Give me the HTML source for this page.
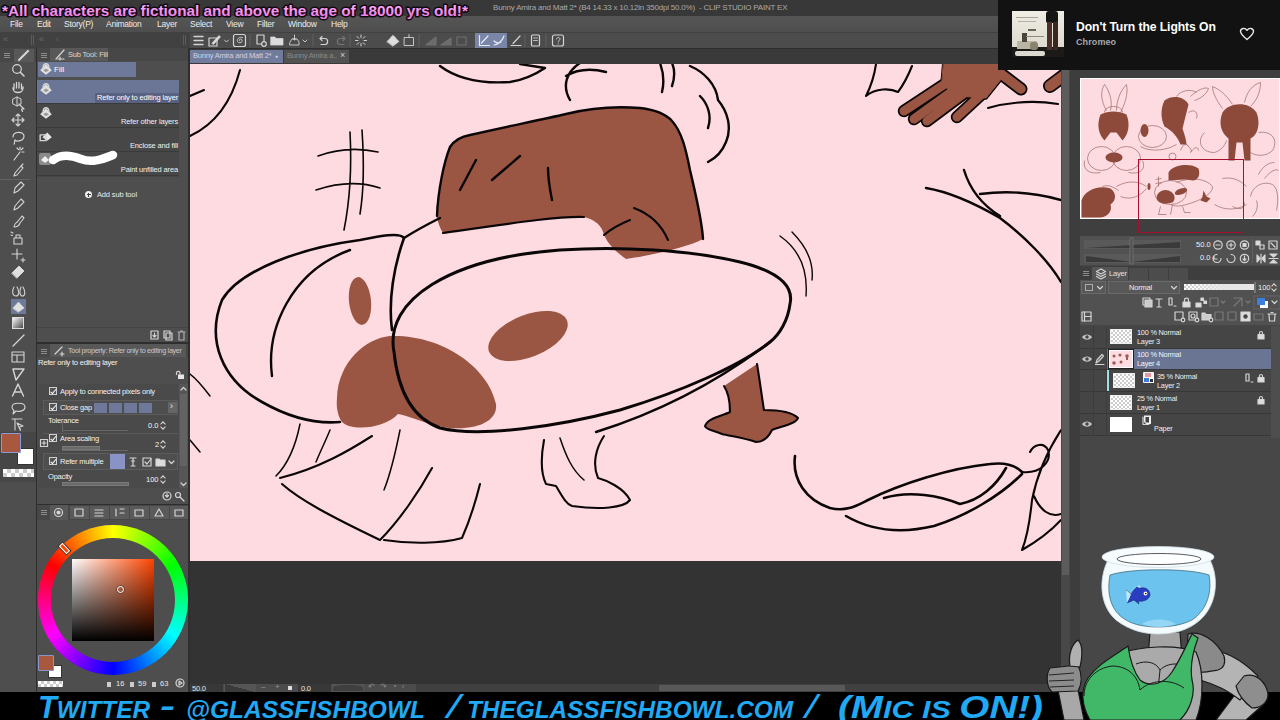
<!DOCTYPE html>
<html><head><meta charset="utf-8"><title>CLIP STUDIO PAINT EX</title>
<style>
html,body{margin:0;padding:0;}
body{width:1280px;height:720px;overflow:hidden;background:#2e2e2e;position:relative;font-family:"Liberation Sans",sans-serif;color:#e4e4e4;font-size:8px;}
.a{position:absolute;}
.t{position:absolute;white-space:nowrap;line-height:1;}
svg{position:absolute;overflow:visible;}
#titlebar{left:0;top:0;width:1280px;height:16px;background:#383838;}
#menubar{left:0;top:16px;width:1280px;height:16px;background:linear-gradient(#555,#4e4e4e);}
#menubar span{position:absolute;top:4px;font-size:8.5px;color:#ececec;letter-spacing:-0.25px;line-height:1;}
#row3{left:0;top:32px;width:1280px;height:16px;background:#414141;}
#cmdbar{left:190px;top:33px;width:880px;height:15px;background:#4c4c4c;}
#tabrow{left:190px;top:49px;width:880px;height:15px;background:#3a3a3a;}
#canvas{left:190px;top:64px;width:871px;height:497px;background:#fedbe1;overflow:hidden;}
#below{left:190px;top:561px;width:871px;height:123px;background:#333;}
#vscroll{left:1061px;top:63px;width:9px;height:629px;background:#484848;}
#hbar{left:190px;top:684px;width:880px;height:8px;background:#4b4b4b;}
#banner{left:0;top:692px;width:1280px;height:28px;background:#000;}
#toolcol{left:0;top:48px;width:36px;height:644px;background:#4e4e4e;}
#subtool{left:37px;top:48px;width:151px;height:294px;background:#4e4e4e;}
#toolprop{left:37px;top:344px;width:151px;height:160px;background:#4e4e4e;}
#colorp{left:37px;top:505px;width:151px;height:187px;background:#4e4e4e;}
#right{left:1070px;top:70px;width:210px;height:622px;background:#474747;}
#music{left:998px;top:0;width:282px;height:70px;background:#121212;z-index:40;}
.ck{position:absolute;background-color:#fff;background-image:linear-gradient(45deg,#ccc 25%,transparent 25%,transparent 75%,#ccc 75%),linear-gradient(45deg,#ccc 25%,transparent 25%,transparent 75%,#ccc 75%);background-size:6px 6px;background-position:0 0,3px 3px;}
.cb{position:absolute;width:8px;height:8px;border:1px solid #d0d0d0;background:#555;box-sizing:border-box;margin-top:-1px;}
.cb:after{content:"";position:absolute;left:2px;top:-0.5px;width:2px;height:4.5px;border:solid #fff;border-width:0 1.4px 1.4px 0;transform:rotate(40deg);}
.sp{position:absolute;width:5px;height:9px;}
.sp:before,.sp:after{content:"";position:absolute;left:0.5px;width:3px;height:3px;border:solid #ddd;border-width:1px 0 0 1px;}
.sp:before{top:1px;transform:rotate(45deg);}
.sp:after{top:4px;transform:rotate(225deg);}
.ic{stroke:#d4d4d4;fill:none;stroke-width:1.2;stroke-linecap:round;stroke-linejoin:round;}
.dim{opacity:.35;}
</style></head><body>
<div id="titlebar" class="a">
 <span class="t" style="left:493px;top:4px;font-size:8px;color:#a9a9a9;letter-spacing:-0.21px">Bunny Amira and Matt 2* (B4 14.33 x 10.12in 350dpi 50.0%)&nbsp; - CLIP STUDIO PAINT EX</span>
</div>
<div id="menubar" class="a">
 <span style="left:10px">File</span><span style="left:37px">Edit</span><span style="left:64px">Story(P)</span><span style="left:106px">Animation</span><span style="left:157px">Layer</span><span style="left:190px">Select</span><span style="left:226px">View</span><span style="left:257px">Filter</span><span style="left:288px">Window</span><span style="left:331px">Help</span>
</div>
<svg id="disclaimer" width="480" height="20" viewBox="0 0 480 20" style="left:0;top:0;z-index:50"><defs><linearGradient id="pk" x1="0" y1="0" x2="0" y2="1"><stop offset="0.150" stop-color="#ffb4fb"/><stop offset="0.800" stop-color="#ee84e6"/></linearGradient></defs><text x="2" y="15.600" font-family="'Liberation Sans',sans-serif" font-weight="bold" font-size="15.300" fill="url(#pk)" stroke="#120812" stroke-width="3" stroke-linejoin="round" paint-order="stroke">*All characters are fictional and above the age of 18000 yrs old!*</text></svg>
<div id="row3" class="a">
 <span class="t" style="left:3px;top:3px;font-size:9px;color:#6a6a6a;letter-spacing:-1px">«</span>
 <span class="t" style="left:39px;top:3px;font-size:9px;color:#6a6a6a;letter-spacing:-1px">«</span>
 <span class="t" style="left:56px;top:3px;font-size:9px;color:#6a6a6a;">‹</span>
 <div class="a" style="left:31px;top:3px;width:3px;height:10px;border-left:1px solid #5c5c5c;border-right:1px solid #5c5c5c;box-sizing:border-box"></div>
 <div class="a" style="left:183px;top:3px;width:3px;height:10px;border-left:1px solid #5c5c5c;border-right:1px solid #5c5c5c;box-sizing:border-box"></div>
</div>
<div id="cmdbar" class="a">
 <svg width="880" height="15" viewBox="190 33 880 15" style="left:0;top:0">
  <rect x="475" y="33" width="32" height="15" fill="#7a86a8"/>
  <g stroke="#666" stroke-width="0.800"><path d="M250,34 L250,47 M313,34 L313,47 M350,34 L350,47 M419,34 L419,47 M525,34 L525,47 M546,34 L546,47"/></g>
  <g class="ic" stroke-width="1.100">
   <path d="M194,36.500 L203,36.500 M194,40.500 L203,40.500 M194,44.500 L203,44.500" stroke-width="1.400"/>
   <rect x="209" y="38" width="8" height="8"/><path d="M212,43 L219,35.500 L220.500,37 L213.500,44.500 Z" fill="#ddd" stroke-width="0.700"/><path d="M224.500,40 L226.500,42 L228.500,40" stroke-width="0.900"/>
   <rect x="233.500" y="34.500" width="12" height="12" rx="2"/><path d="M239.500,41 C238,39.500 241,38 242,40 C243,42.500 239,44 237.500,41.500 C236.500,38.500 240,36.500 242.500,37.500" stroke-width="0.900"/>
   <path d="M257,35 L264,35 L264,44 L257,44 Z"/><circle cx="264" cy="44" r="2.300" fill="#4c4c4c"/>
   <path d="M271,37 L275,37 L276,38.500 L283,38.500 L283,45 L271,45 Z" fill="#ddd" stroke-width="0.800"/>
   <path d="M290,45 L299,45 L299,42 L297,39 L292,39 L290,42 Z M294.500,35 L294.500,40 M293,38.500 L294.500,40 L296,38.500" stroke-width="0.900"/><path d="M303,40 L305,42 L307,40" stroke-width="0.900"/>
   <path d="M320,38.500 L325,38.500 C328.500,38.500 328.500,44.500 325,44.500 L321,44.500 M322,36.500 L320,38.500 L322,40.500"/>
   <g opacity="0.300"><path d="M345,38.500 L340,38.500 C336.500,38.500 336.500,44.500 340,44.500 L344,44.500 M343,36.500 L345,38.500 L343,40.500"/></g>
   <g stroke-width="1"><path d="M361,35 L361,37.500 M361,43.500 L361,46 M355.500,40.500 L358,40.500 M364,40.500 L366.500,40.500 M357,36.500 L358.800,38.300 M363.200,42.700 L365,44.500 M365,36.500 L363.200,38.300 M358.800,42.700 L357,44.500"/></g>
   <path d="M387,41.500 L393,35.500 L399,41.500 L393,46 Z" fill="#ddd" stroke-width="0.700"/><path d="M390.500,38.500 C391,35 395,35 395.500,38.500" stroke-width="0.800"/>
   <rect x="404.500" y="37.500" width="9" height="8" stroke-width="0.900"/><path d="M409,34.500 L409,37.500" stroke-width="0.900"/>
   <g opacity="0.250"><path d="M426,45 L436,45 L436,37 Z" fill="#ccc"/><path d="M441,45 L451,45 L451,38 Z" fill="#ccc"/><rect x="457" y="37" width="9" height="8"/></g>
   <path d="M479.500,35.500 L479.500,45.500 L489.500,45.500 M481.500,43 L488,36" stroke="#e8ecf8"/>
   <path d="M494,45 C497,45 502,42 504,36 M494,41 C496,43 499,43 501,42" stroke="#e8ecf8"/>
   <path d="M511,45.500 L521,45.500 M513,43.500 L520,36"/>
   <rect x="531.500" y="35" width="8" height="11" rx="1"/><path d="M533.500,38 L537.500,38 M533.500,40.500 L537.500,40.500" stroke-width="0.800"/>
   <rect x="552.500" y="35" width="11" height="11" rx="2"/><path d="M556.500,39 C556.500,37 560,37 560,39 C560,40.500 558.200,40.500 558.200,42 M558.200,43.800 L558.200,44" stroke-width="0.900"/>
  </g>
 </svg>
</div>
<div id="tabrow" class="a">
 <div class="a" style="left:0;top:1px;width:93px;height:13px;background:#717b9b"></div>
 <span class="t" style="left:3px;top:3px;font-size:7.5px;color:#cfd4e6;letter-spacing:-0.2px">Bunny Amira and Matt 2*</span>
 <span class="t" style="left:85px;top:3px;font-size:5px;color:#cfd4e6;margin-top:1.5px">●</span>
 <div class="a" style="left:94px;top:1px;width:65px;height:13px;background:#525252"></div>
 <span class="t" style="left:97px;top:3px;font-size:7.5px;color:#8a8a8a;letter-spacing:-0.2px">Bunny Amira a..</span>
 <span class="t" style="left:150px;top:2px;font-size:9px;color:#d0d0d0">×</span>
</div>
<div id="canvas" class="a">
<svg width="871" height="497" viewBox="190 64 871 497" style="left:0;top:0">
 <g fill="#9a5643" stroke="none">
  <path d="M443,233 C438,224 435,214 437,204 C440,184 444,162 450,147 C456,138 464,136 470,135 C500,128 540,120 566,114 C590,108 615,106 640,108 C656,110 666,114 672,121 C682,132 686,150 690,170 C696,196 702,220 703,239 C690,246 660,254 626,259 C616,252 608,244 604,235 C602,226 596,220 584,217 C560,216 520,222 443,233 Z"/>
  <path d="M337,398 C338,362 366,338 390,336 C440,334 488,366 496,404 C498,420 480,430 450,428 C430,426 410,416 398,414 C386,428 352,432 342,422 C338,416 336,408 337,398 Z"/>
  <ellipse cx="528" cy="336" rx="42" ry="21" transform="rotate(-22 528 336)"/>
  <ellipse cx="360" cy="301" rx="11" ry="24" transform="rotate(-6 360 301)"/>
  <path d="M757,364 C760,382 762,398 764,410 C778,410 792,412 798,418 C796,424 782,426 772,430 C768,438 762,442 756,442 C744,438 730,436 722,434 C714,430 706,430 705,426 C708,418 722,416 730,412 C730,402 728,392 724,386 Z"/>
 </g>

 <g fill="none" stroke-linecap="round" stroke-linejoin="round">
  <g stroke="#0b0708">
   <path d="M948,82 L904,111 M957,88 L914,119 M966,92 L927,121 M984,92 L957,117" stroke-width="12.500"/>
   <path d="M996,70 L1021,89" stroke-width="13"/>
   <path d="M1050,86 L1066,74" stroke-width="14"/>
   <path d="M944,60 L998,60 L1002,78 L986,98 L956,96 L942,84 Z" fill="#0b0708" stroke-width="3.500"/>
  </g>
  <g stroke="#9a5643">
   <path d="M944,58 L998,58 L1002,78 L986,98 L956,96 L942,84 Z" fill="#9a5643" stroke-width="1"/>
   <path d="M948,82 L904,111 M957,88 L914,119 M966,92 L927,121 M984,92 L957,117" stroke-width="9"/>
   <path d="M996,70 L1021,89" stroke-width="9.500"/>
   <path d="M1050,86 L1066,74" stroke-width="10.500"/>
  </g>
 </g>
 <g fill="none" stroke="#0b0708" stroke-width="2.400" stroke-linecap="round" stroke-linejoin="round">
  <path d="M437,216 C438,190 444,162 450,147 C456,138 464,136 470,135 C500,128 540,120 566,114 C590,108 615,106 640,108 C656,110 666,114 672,121 C682,132 686,150 690,170 C696,196 702,220 703,239" stroke-width="2.400"/>
  <path d="M443,233 C520,222 560,216 584,217" stroke-width="2.100"/>
  <path d="M492,180 L520,156 M548,168 C548,180 550,190 552,200 M460,190 L476,160" stroke-width="2.400"/>
  <path d="M634,208 C650,214 662,226 668,240 M604,235 C610,230 620,224 630,220" stroke-width="2.100"/>
  <path d="M394,352 C384,300 450,258 560,250 C620,246 690,250 740,262 C780,272 794,286 790,304 C788,320 780,334 770,342 C740,366 680,392 620,410 C560,426 480,438 440,428 C412,418 398,390 394,352 Z" stroke-width="3"/>
  <path d="M392,330 C388,300 394,266 404,238 C400,232 380,236 360,240 C300,248 240,270 222,300 C206,340 222,380 262,402 C290,418 316,424 340,422" stroke-width="2.600"/>
  <path d="M272,376 C266,330 290,272 350,250 M404,238 C420,228 432,222 440,218" stroke-width="2.400"/>
  <path d="M770,342 C720,380 660,412 596,432" stroke-width="2.400"/>
  <path d="M282,484 C300,500 330,516 380,540 M380,540 C400,520 420,490 432,468 M280,478 C320,468 350,450 372,436 M384,540 C410,544 440,544 462,538 C470,520 476,500 480,484" stroke-width="2.100"/>
  <path d="M544,440 C540,462 542,476 546,484 L556,486 C562,496 566,504 572,506 C600,510 624,508 630,500 C624,488 606,480 598,478 C592,464 596,448 604,436" stroke-width="2.100"/>
  <path d="M300,424 C296,444 290,462 276,476 M330,430 C326,440 320,452 316,462 M400,430 C396,450 392,470 384,490 M560,438 C566,456 572,470 584,480" stroke-width="1.500"/>
  <path d="M926,188 C950,192 976,204 1000,218 C1024,236 1048,260 1061,282 M964,170 C970,190 984,206 1000,216 M980,194 C1010,190 1040,194 1061,200" stroke-width="2.400"/>
  <path d="M795,456 C792,480 806,500 830,508 C846,512 856,506 868,500 C900,484 950,468 990,464 C1006,462 1016,466 1022,472 M846,516 C870,530 900,534 934,526 C966,516 1000,496 1022,474 M884,498 C910,490 940,496 960,504 C980,500 996,486 1006,468" stroke-width="2.600"/>
  <path d="M1022,472 C1040,474 1052,462 1048,450 C1044,442 1034,444 1030,452 M1061,430 C1044,456 1036,480 1032,500 C1030,520 1026,540 1022,550 C1036,542 1050,532 1061,520 M1034,496 C1040,510 1050,518 1061,514" stroke-width="2.100"/>
  <path d="M350,132 C352,170 350,200 344,230 M362,130 C364,160 364,190 360,214 M318,156 C340,148 360,148 378,152 M316,190 C340,182 362,182 380,188" stroke-width="1.600"/>
  <path d="M440,66 C456,78 480,84 510,82 C524,80 536,74 545,68 L520,64 M570,100 C562,86 566,72 580,63 M566,76 C576,70 590,68 606,72 M660,63 C664,74 664,84 662,92 M672,63 C676,72 674,80 672,86 M690,66 C704,72 716,84 718,100 C728,112 732,128 726,142 C722,152 716,158 708,162 M700,96 C708,104 712,116 708,128" stroke-width="2.400"/>
  <path d="M190,136 C216,124 232,100 240,70 M190,96 L204,90 M876,64 C874,78 870,88 866,96 C876,88 890,88 898,92 M912,66 C908,76 904,84 898,92 M988,108 C1010,102 1034,100 1058,104" stroke-width="2.100"/>
  <path d="M780,236 C800,250 808,270 806,296 M792,232 C806,246 814,262 812,280" stroke-width="1.400"/>
  <path d="M757,364 C760,382 762,398 764,410 C778,410 792,412 798,418 C796,424 782,426 772,430 C768,438 762,442 756,442 C744,438 730,436 722,434 C714,430 706,430 705,426 C708,418 722,416 730,412 C730,402 728,392 724,386" stroke-width="2.100"/>
  <path d="M190,374 C198,380 204,388 210,396 M190,440 L200,452" stroke-width="1.500"/>
 </g>
</svg>
</div>
<div id="below" class="a"></div>
<div id="vscroll" class="a"><div class="a" style="left:1px;top:0;width:7px;height:512px;background:#5c5c5c"></div></div>
<div id="hbar" class="a">
 <div class="a" style="left:0;top:0;width:33px;height:8px;background:#383838"></div>
 <span class="t" style="left:2px;top:0.500px;font-size:7.500px;color:#e6e6e6;letter-spacing:-0.2px">50.0</span>
 <div class="a" style="left:34px;top:0;width:32px;height:8px;background:#555"></div>
 <div class="a" style="left:35px;top:0;width:30px;height:8px;background:linear-gradient(to right top,#3a3a3a 50%,#555 50%)"></div>
 <span class="t" style="left:71px;top:-1px;font-size:8px;color:#999">–</span><span class="t" style="left:85px;top:-1px;font-size:8px;color:#999">+</span>
 <div class="a" style="left:98px;top:2px;width:4px;height:4px;background:#ddd"></div>
 <div class="a" style="left:108px;top:0;width:33px;height:8px;background:#383838"></div>
 <span class="t" style="left:111px;top:0.500px;font-size:7.500px;color:#e6e6e6;letter-spacing:-0.2px">0.0</span>
 <div class="a" style="left:142px;top:0;width:32px;height:8px;background:#555"></div>
 <div class="a" style="left:143px;top:1px;width:30px;height:6px;background:#3f3f3f;border-radius:40% 40% 0 0"></div>
 <span class="t" style="left:178px;top:-1px;font-size:8px;color:#888;letter-spacing:5px">↶↷◔‹</span>
 <div class="a" style="left:226px;top:0;width:645px;height:8px;background:#404040"></div>
 <div class="a" style="left:469px;top:1px;width:186px;height:6px;background:#585858"></div>
</div>
<div id="toolcol" class="a">
 <div class="a" style="left:0;top:0;width:36px;height:14px;background:#474747"></div>
 <div class="a" style="left:14px;top:1px;width:20px;height:13px;background:#585858"></div>
 <div class="a" style="left:4px;top:5px;width:6px;height:5px;border-top:1px solid #8c8c8c;border-bottom:1px solid #8c8c8c;box-sizing:border-box"></div>
 <div class="a" style="left:4px;top:7px;width:6px;height:1px;background:#8c8c8c"></div>
 <svg width="36" height="644" viewBox="0 48 36 644" style="left:0;top:0">
  <g class="ic">
   <path d="M19,60 L28,51" stroke-width="2.2"/>
   <circle cx="17" cy="69" r="4.3"/><path d="M20.5,72.5 L24,76" stroke-width="1.6"/>
   <path d="M14,89 L14,84 M16.5,88 L16.5,82.5 M19,88 L19,82.5 M21.5,89 L21.5,84 M13,88 C13,94 23,94 23,88 L23,87" stroke-width="1.3"/>
   <path d="M13,99 L17,97 L21,99 L21,104 L17,106 L13,104 Z M17,97 L17,106" stroke-width="1"/><path d="M19,104 L24,109 L21.5,109 L22.5,111.5" stroke-width="1.2"/>
   <path d="M18,114 L18,126 M12,120 L24,120 M16,116 L18,114 L20,116 M16,124 L18,126 L20,124 M14,118 L12,120 L14,122 M22,118 L24,120 L22,122" stroke-width="1.1"/>
   <path d="M13,137 C13,131 24,131 24,136 C24,141 17,142 15,140 C14,142 15,143 14,144" stroke-width="1.2"/>
   <path d="M14,160 L20,152 M20,147 L20,150 M24,152 L22,152 M23,148 L21.5,149.5 M17,148 L18.5,149.5" stroke-width="1.2"/>
   <path d="M14,176 L15,173 L21,166 L23,168 L17,175 Z M21,166 L23,164" stroke-width="1.1"/>
   <path d="M14,193 L15,188 L21,182 L24,185 L18,191 Z" stroke-width="1.1"/>
   <path d="M14,210 L15,206 L21,199 L24,202 L18,208 Z" stroke-width="1.1"/>
   <path d="M14,227 C14,223 17,223 18,221 L22,216 L24,218 L20,223 C19,226 17,227 14,227 Z" stroke-width="1.1"/>
   <path d="M14,238 L22,238 L22,244 L14,244 Z M16,238 L16,235 L20,235 L20,238 M11,232 L13,233 M11,235 L12.5,235.5" stroke-width="1.1"/>
   <path d="M17,249 L17,259 M12,254 L22,254 M23,258 L23,262 M21,260 L25,260" stroke-width="1.1"/>
   <path d="M12,273 L19,266 L24,271 L17,278 Z" fill="#e0e0e0" stroke-width="1"/>
   <path d="M14,287 C11,292 13,296 16,296 C19,296 20,292 17,287 M21,287 C19,292 20,296 22.5,296 C25,296 26,292 23,287" stroke-width="1.1"/>
  </g>
  <rect x="11" y="299" width="15" height="15" fill="#6e7898"/>
  <g class="ic">
   <path d="M13,308 L18.5,302 L24,308 L18.5,312 Z" fill="#e0e0e0" stroke-width="0.8"/>
  </g>
  <defs><linearGradient id="gr1" x1="0" y1="0" x2="1" y2="1"><stop offset="0" stop-color="#fff"/><stop offset="1" stop-color="#444"/></linearGradient></defs>
  <rect x="12.5" y="317.500" width="11" height="11" fill="url(#gr1)" stroke="#ddd" stroke-width="1"/>
  <g class="ic">
   <path d="M13,346 L24,335" stroke-width="1.3"/>
   <path d="M12,352 L24,352 L24,362 L12,362 Z M12,355 L24,355 M17,355 L17,362" stroke-width="1.1"/>
   <path d="M13,369 L24,369 L16,380 Z" stroke-width="1.4"/>
   <path d="M12.500,396 L18,384 L23.500,396 M14.500,392 L21.500,392" stroke-width="1.4"/>
   <path d="M12,407 C12,402 25,402 25,407 C25,411 19,412 16,411 L13,414 L14,410.500 C12.500,409.500 12,408.500 12,407 Z" stroke-width="1.1"/>
   <path d="M12,419 L22,419 M15,419 L15,430 M17,423 L23,426 L19.500,427 L20.500,430.500 Z" stroke-width="1.1"/>
  </g>
 </svg>
 <div class="a" style="left:0;top:131px;width:30px;height:1px;background:#626262"></div>
 <div class="a" style="left:0;top:384px;width:36px;height:50px;background:#464646"></div>
 <div class="a" style="left:17px;top:400px;width:17px;height:17px;background:#fff;border:1px solid #333;box-sizing:border-box"></div>
 <div class="a" style="left:1px;top:385px;width:20px;height:20px;background:#a8583f;border:1.5px solid #8a9ad8;box-sizing:border-box;border-radius:1px"></div>
 <div class="ck" style="left:3px;top:421px;width:31px;height:8px;background-size:8px 8px;background-position:0 0,4px 4px"></div>
</div>
<div id="subtool" class="a">
 <div class="a" style="left:0;top:0;width:151px;height:13px;background:#474747"></div>
 <div class="a" style="left:13px;top:0;width:58px;height:13px;background:#585858"></div>
 <div class="a" style="left:4px;top:5px;width:6px;height:5px;border-top:1px solid #8c8c8c;border-bottom:1px solid #8c8c8c;box-sizing:border-box"></div>
 <div class="a" style="left:4px;top:7px;width:6px;height:1px;background:#8c8c8c"></div>
 <svg width="14" height="12" viewBox="0 0 14 12" style="left:17px;top:1px"><path class="ic" d="M2,10 L10,1" stroke-width="2"/><path class="ic" d="M4,10 L10,10 M6,8 L6,11" stroke-width="1"/></svg>
 <span class="t" style="left:31px;top:3px;font-size:7.5px;color:#d6d6d6;letter-spacing:-0.2px">Sub Tool: Fill</span>
 <div class="a" style="left:1px;top:14px;width:98px;height:15px;background:#6e7898"></div>
 <svg width="14" height="14" viewBox="0 0 12 12" style="left:2px;top:14px"><path d="M1,7 L6,2 L11,7 L6,11 Z" fill="#e0e0e0"/><path d="M3.500,7 L6,8.800 L8.500,7 L6,5.500 Z" fill="#9a9a9a"/><path class="ic" d="M3.500,4.500 C4,0.500 8,0.500 8.500,4.500" stroke-width="1"/></svg>
 <span class="t" style="left:17px;top:18px;font-size:8px;color:#fff">Fill</span>
 <div class="a" style="left:0;top:32px;width:142px;height:97px;background:#474747"></div>
 <div class="a" style="left:0;top:32px;width:142px;height:23px;background:#6b7595"></div>
 <div class="a" style="left:58px;top:45px;width:84px;height:10px;background:#596282"></div>
 <div class="a" style="left:0;top:55px;width:142px;height:1px;background:#3a3a3a"></div>
 <div class="a" style="left:0;top:79px;width:142px;height:1px;background:#3a3a3a"></div>
 <div class="a" style="left:0;top:103px;width:142px;height:1px;background:#3a3a3a"></div>
 <div class="a" style="left:0;top:127px;width:142px;height:1px;background:#3a3a3a"></div>
 <svg width="14" height="14" viewBox="0 0 12 12" style="left:2px;top:34px"><path d="M1,7 L6,2 L11,7 L6,11 Z" fill="#e0e0e0"/><path d="M3.500,7 L6,8.800 L8.500,7 L6,5.500 Z" fill="#9a9a9a"/><path class="ic" d="M3.500,4.500 C4,0.500 8,0.500 8.500,4.500" stroke-width="1"/></svg>
 <svg width="14" height="14" viewBox="0 0 12 12" style="left:2px;top:58px"><path d="M1,7 L6,2 L11,7 L6,11 Z" fill="#e0e0e0"/><path d="M3.500,7 L6,8.800 L8.500,7 L6,5.500 Z" fill="#9a9a9a"/><path class="ic" d="M3.500,4.500 C4,0.500 8,0.500 8.500,4.500" stroke-width="1"/></svg>
 <svg width="14" height="14" viewBox="0 0 12 12" style="left:2px;top:81px"><path d="M3,7 L7,3 L11,7 L7,10 Z" fill="#e6e6e6"/><rect x="1" y="5" width="5" height="5" class="ic" stroke-width="0.9"/></svg>
 <div class="a" style="left:2px;top:105px;width:12px;height:12px;background:#8a8a8a;border-radius:2px"></div>
 <svg width="12" height="12" viewBox="0 0 12 12" style="left:2px;top:105px"><path d="M2,7 L6,3 L10,7 L6,10 Z" fill="#eee"/></svg>
 <svg width="80" height="20" viewBox="0 0 80 20" style="left:10px;top:102px"><path d="M6,10 C14,4 24,5 34,9 C44,13 54,10 66,5" fill="none" stroke="#fff" stroke-width="8.500" stroke-linecap="round"/></svg>
 <span class="t" style="right:10px;top:46px;font-size:7.5px;color:#fff;letter-spacing:-0.15px">Refer only to editing layer</span>
 <span class="t" style="right:10px;top:70px;font-size:7.5px;color:#f0f0f0;letter-spacing:-0.15px">Refer other layers</span>
 <span class="t" style="right:10px;top:94px;font-size:7.5px;color:#f0f0f0;letter-spacing:-0.15px">Enclose and fill</span>
 <span class="t" style="right:10px;top:118px;font-size:7.5px;color:#f0f0f0;letter-spacing:-0.15px">Paint unfilled area</span>
 <div class="a" style="left:48px;top:143px;width:7px;height:7px;border-radius:50%;background:#eee"></div>
 <div class="a" style="left:49.500px;top:146px;width:4px;height:1px;background:#444"></div>
 <div class="a" style="left:51px;top:144.500px;width:1px;height:4px;background:#444"></div>
 <span class="t" style="left:60px;top:143px;font-size:7.5px;color:#e8e8e8;letter-spacing:-0.15px">Add sub tool</span>
 <div class="a" style="left:0;top:279px;width:151px;height:1px;background:#444"></div>
 <svg width="40" height="12" viewBox="0 0 40 12" style="left:111px;top:281px"><g class="ic" stroke-width="0.9"><rect x="3" y="2" width="7" height="8"/><path d="M6.500,4 L6.500,8 M5,6.500 L6.500,8 L8,6.500"/><rect x="16" y="2" width="6" height="7"/><rect x="18" y="4" width="6" height="7"/><path d="M31,3 L36,3 L36,11 L31,11 Z M30,3 L37,3 M32.500,2 L34.500,2" opacity="0.7"/></g></svg>
</div>
<div id="toolprop" class="a">
 <div class="a" style="left:0;top:0;width:151px;height:13px;background:#474747"></div>
 <div class="a" style="left:13px;top:0;width:136px;height:13px;background:#585858"></div>
 <div class="a" style="left:4px;top:5px;width:6px;height:5px;border-top:1px solid #8c8c8c;border-bottom:1px solid #8c8c8c;box-sizing:border-box"></div>
 <div class="a" style="left:4px;top:7px;width:6px;height:1px;background:#8c8c8c"></div>
 <svg width="14" height="12" viewBox="0 0 14 12" style="left:16px;top:1px"><path class="ic" d="M2,9 L9,2" stroke-width="1.6"/><path class="ic" d="M7,9 L11,9 M9,7 L9,11" stroke-width="0.9"/></svg>
 <span class="t" style="left:31px;top:3px;font-size:7.200px;color:#c8c8c8;letter-spacing:-0.32px">Tool property: Refer only to editing layer</span>
 <span class="t" style="left:1px;top:15px;font-size:7.600px;color:#f2f2f2;letter-spacing:-0.25px">Refer only to editing layer</span>
 <svg width="10" height="10" viewBox="0 0 10 10" style="left:138px;top:26px"><rect x="3" y="4.500" width="6" height="4.500" fill="#e8e8e8"/><path class="ic" d="M1.500,4.500 L1.500,3 C1.500,0.800 5,0.800 5,3 L5,4.500" stroke-width="1"/></svg>
 <div class="a" style="left:1px;top:40px;width:141px;height:104px;background:#4a4a4a"></div>
 <div class="a" style="left:142px;top:40px;width:9px;height:104px;background:#565656"></div>
 <div class="a" style="left:143px;top:50px;width:7px;height:72px;background:#636363"></div>
 <div class="cb" style="left:12px;top:44px"></div>
 <span class="t" style="left:23px;top:44px;font-size:7.500px;color:#f2f2f2;letter-spacing:-0.2px">Apply to connected pixels only</span>
 <div class="a" style="left:6px;top:56px;width:135px;height:15px;border:1px solid #5c5c5c;box-sizing:border-box;background:#4e4e4e"></div>
 <div class="cb" style="left:12px;top:60px"></div>
 <span class="t" style="left:23px;top:60px;font-size:7.500px;color:#f2f2f2;letter-spacing:-0.2px">Close gap</span>
 <div class="a" style="left:57px;top:59px;width:13px;height:10px;background:#6e7898"></div>
 <div class="a" style="left:72px;top:59px;width:13px;height:10px;background:#6e7898"></div>
 <div class="a" style="left:87px;top:59px;width:13px;height:10px;background:#6e7898"></div>
 <div class="a" style="left:102px;top:59px;width:13px;height:10px;background:#6e7898"></div>
 <div class="a" style="left:131px;top:58px;width:9px;height:11px;background:#666"></div>
 <span class="t" style="left:133px;top:58px;font-size:9px;color:#eee">›</span>
 <span class="t" style="left:11px;top:73px;font-size:7.500px;color:#f2f2f2;letter-spacing:-0.2px">Tolerance</span>
 <span class="t" style="left:111px;top:78px;font-size:7.500px;color:#f2f2f2">0.0</span><div class="sp" style="left:123px;top:77px"></div>
 <div class="a" style="left:25px;top:76px;width:1px;height:12px;background:#666"></div>
 <div class="a" style="left:25px;top:86px;width:66px;height:1px;background:#666"></div>
 <div class="a" style="left:6px;top:89px;width:135px;height:1px;background:#5a5a5a"></div>
 <svg width="8" height="8" viewBox="0 0 8 8" style="left:3px;top:95px"><rect x="0.500" y="0.500" width="7" height="7" class="ic" stroke-width="0.8"/><path class="ic" d="M2,4 L6,4 M4,2 L4,6" stroke-width="0.8"/></svg>
 <div class="cb" style="left:12px;top:91px"></div>
 <span class="t" style="left:23px;top:91px;font-size:7.500px;color:#f2f2f2;letter-spacing:-0.2px">Area scaling</span>
 <span class="t" style="left:118px;top:97px;font-size:7.500px;color:#f2f2f2">2</span><div class="sp" style="left:123px;top:96px"></div>
 <div class="a" style="left:25px;top:102px;width:38px;height:4px;background:#6a6a6a;border:1px solid #7a7a7a;box-sizing:border-box"></div>
 <div class="a" style="left:25px;top:106px;width:66px;height:1px;background:#666"></div>
 <div class="a" style="left:6px;top:109px;width:135px;height:17px;border:1px solid #5c5c5c;box-sizing:border-box;background:#4e4e4e"></div>
 <div class="cb" style="left:12px;top:114px"></div>
 <span class="t" style="left:23px;top:114px;font-size:7.500px;color:#f2f2f2;letter-spacing:-0.2px">Refer multiple</span>
 <div class="a" style="left:73px;top:110px;width:15px;height:15px;background:#8a93c6"></div>
 <svg width="50" height="14" viewBox="0 0 50 14" style="left:91px;top:111px"><g class="ic" stroke-width="0.9"><path d="M2,3 L8,3 M5,3 L5,11 M3,11 L7,11 M3.500,6 L6.500,6"/><rect x="15" y="3" width="8" height="8"/><path d="M17,7 L19,9 L23,4"/><path d="M28,4 L31,4 L32,5 L37,5 L37,11 L28,11 Z" fill="#ddd"/><path d="M41,6 L43.500,8.500 L46,6"/></g></svg>
 <span class="t" style="left:11px;top:129px;font-size:7.500px;color:#f2f2f2;letter-spacing:-0.2px">Opacity</span>
 <span class="t" style="left:109px;top:132px;font-size:7.500px;color:#f2f2f2">100</span><div class="sp" style="left:123px;top:131px"></div>
 <div class="a" style="left:25px;top:138px;width:67px;height:4px;background:#6a6a6a;border:1px solid #7a7a7a;box-sizing:border-box"></div>
 <svg width="9" height="6" viewBox="0 0 9 6" style="left:142px;top:42px"><path d="M2,4 L4.500,1.500 L7,4" class="ic" stroke-width="0.9"/></svg>
 <svg width="9" height="6" viewBox="0 0 9 6" style="left:142px;top:137px"><path d="M2,2 L4.500,4.500 L7,2" class="ic" stroke-width="0.9"/></svg>
 <svg width="26" height="12" viewBox="0 0 26 12" style="left:124px;top:146px"><g class="ic" stroke-width="0.9"><circle cx="6" cy="6" r="4"/><path d="M6,3.500 L6,6.500 M4.500,5.500 L6,7 L7.500,5.500"/><circle cx="17" cy="5" r="2.500"/><path d="M19,7 L23,11"/></g></svg>
</div>
<div id="colorp" class="a">
 <div class="a" style="left:0;top:0;width:151px;height:15px;background:#474747"></div>
 <div class="a" style="left:13px;top:0;width:18px;height:15px;background:#585858"></div>
 <div class="a" style="left:4px;top:5px;width:6px;height:5px;border-top:1px solid #8c8c8c;border-bottom:1px solid #8c8c8c;box-sizing:border-box"></div>
 <div class="a" style="left:4px;top:7px;width:6px;height:1px;background:#8c8c8c"></div>
 <svg width="151" height="15" viewBox="0 0 151 15" style="left:0;top:0"><g class="ic" stroke-width="1"><circle cx="21.500" cy="7.500" r="4"/><circle cx="21.500" cy="7.500" r="1.500" fill="#ddd"/></g>
  <g fill="#5a5a5a" stroke="none"><rect x="33" y="1" width="19" height="13"/><rect x="53" y="1" width="19" height="13"/><rect x="73" y="1" width="19" height="13"/><rect x="93" y="1" width="19" height="13"/><rect x="113" y="1" width="19" height="13"/><rect x="133" y="1" width="18" height="13"/></g>
  <g class="ic" stroke="#8a8a8a" stroke-width="0.9"><rect x="38" y="4" width="8" height="7"/><path d="M58,5 L66,5 M58,8 L66,8 M58,11 L66,11 M79,4 L79,11 M83,4 L87,4 M83,8 L87,8 M98,5 L106,5 L106,11 L98,11 Z M118,11 L122,4 L126,11 Z M138,5 L146,5 L146,11 L138,11 Z"/></g></svg>
 <div class="a" style="left:0.500px;top:19.500px;width:150px;height:150px;border-radius:50%;background:conic-gradient(from 0deg,#ffff00 0deg,#00ff00 60deg,#00ffff 120deg,#0000ff 180deg,#ff00ff 240deg,#ff0000 300deg,#ffff00 360deg)"></div>
 <div class="a" style="left:13.500px;top:32.500px;width:124px;height:124px;border-radius:50%;background:#4e4e4e"></div>
 <div class="a" style="left:35px;top:54px;width:82px;height:82px;background:linear-gradient(to bottom,rgba(0,0,0,0),#000),linear-gradient(to right,#fff,#ff4400)"></div>
 <div class="a" style="left:80px;top:80.500px;width:5px;height:5px;border:1px solid #fff;border-radius:50%;box-shadow:0 0 0 0.5px #333"></div>
 <div class="a" style="left:22px;top:41px;width:11px;height:5px;border:1.500px solid #fff;box-shadow:0 0 0 1px #333;transform:rotate(46deg);box-sizing:border-box;background:#ff4400"></div>
 <div class="a" style="left:11px;top:160px;width:14px;height:13px;background:#fff;border:1px solid #333;box-sizing:border-box"></div>
 <div class="a" style="left:1px;top:150px;width:16px;height:16px;background:#a8583f;border:1.500px solid #8a96c8;box-sizing:border-box;border-radius:1px"></div>
 <div class="ck" style="left:1px;top:176px;width:25px;height:6px"></div>
 <span class="t" style="left:79px;top:175px;font-size:7.500px;color:#e8e8e8">16</span>
 <span class="t" style="left:101px;top:175px;font-size:7.500px;color:#e8e8e8">59</span>
 <span class="t" style="left:123px;top:175px;font-size:7.500px;color:#e8e8e8">63</span>
 <div class="a" style="left:70px;top:177px;width:4px;height:5px;background:#ccc"></div>
 <div class="a" style="left:93px;top:177px;width:4px;height:5px;background:#ccc"></div>
 <div class="a" style="left:115px;top:177px;width:4px;height:5px;background:#ccc"></div>
 <svg width="10" height="10" viewBox="0 0 10 10" style="left:138px;top:173px"><circle cx="5" cy="5" r="4" class="ic" stroke-width="0.9"/><path d="M4,3 L7,5 L4,7 Z" class="ic" stroke-width="0.8"/></svg>
</div>
<div id="right" class="a">
 <div class="a" style="left:0;top:0;width:210px;height:166px;background:#3f3f3f"></div>
 <div class="a" style="left:0;top:0;width:10px;height:622px;background:#3d3d3d"></div>
 <div class="a" style="left:9.500px;top:7.500px;width:200px;height:141px;background:#fedbe1;border:1px solid #fff;box-sizing:border-box;overflow:hidden">
  <svg width="198" height="139" viewBox="1080.500 78.500 198 139" style="left:0;top:0">
   <g fill="#8d4a3a">
    <path d="M1100,114 C1108,110 1118,110 1126,114 C1130,124 1128,134 1122,140 L1116,132 L1110,132 L1104,140 C1098,134 1096,124 1100,114 Z"/>
    <ellipse cx="1113.500" cy="157" rx="8.500" ry="5"/>
    <path d="M1164,100 C1172,94 1184,96 1188,104 C1186,112 1184,120 1182,128 C1184,134 1186,140 1186,144 L1180,144 C1178,138 1172,130 1164,126 C1160,118 1160,108 1164,100 Z"/>
    <ellipse cx="1144" cy="130" rx="4" ry="6.500"/>
    <path d="M1222,112 C1228,102 1248,100 1256,112 C1260,122 1258,134 1250,138 L1250,160 L1244,160 L1242,142 L1236,142 L1234,160 L1228,160 L1228,138 C1220,132 1218,122 1222,112 Z"/>
    <path d="M1081,200 C1084,190 1098,184 1110,188 C1116,192 1116,200 1110,204 C1112,210 1108,216 1100,217 L1081,217 Z"/>
    <path d="M1168,172 C1172,164 1190,162 1198,168 C1200,174 1198,180 1192,180 C1184,178 1176,180 1168,180 Z"/>
    <path d="M1156,198 C1156,192 1162,188 1168,190 C1174,192 1176,198 1172,202 C1166,204 1158,204 1156,198 Z"/>
    <ellipse cx="1180.500" cy="191" rx="6.500" ry="3" transform="rotate(-20 1180.500 191)"/><ellipse cx="1148.500" cy="186" rx="1.500" ry="3.500"/>
    <path d="M1203,190 L1206,196 L1210,198 L1206,202 L1200,200 L1202,196 Z"/>
   </g>
   <g fill="none" stroke="#8a5550" stroke-width="0.700" opacity="0.850">
    <ellipse cx="1101" cy="158" rx="14" ry="12"/><ellipse cx="1126" cy="158" rx="14" ry="12"/>
    <path d="M1106,110 C1100,100 1100,90 1104,84 C1110,92 1112,102 1110,110 M1116,110 C1116,100 1120,90 1126,84 C1128,94 1124,104 1120,112 M1104,112 C1104,104 1122,104 1122,112"/>
    <path d="M1084,160 C1082,170 1090,174 1100,172 M1142,160 C1146,170 1138,174 1128,172"/>
    <ellipse cx="1152" cy="136" rx="14" ry="11"/><path d="M1140,146 C1150,152 1166,150 1176,144 M1186,144 C1190,148 1192,150 1190,152"/>
    <path d="M1176,96 C1180,90 1190,88 1196,92 M1190,96 C1196,90 1204,86 1208,88 C1206,94 1200,98 1194,100 M1188,112 C1194,108 1198,112 1196,118"/>
    <path d="M1222,108 C1216,100 1212,92 1212,86 C1222,90 1228,98 1232,104 M1244,102 C1246,92 1252,84 1260,82 C1260,92 1256,100 1250,106"/>
    <path d="M1204,132 C1196,140 1200,152 1214,152 C1220,150 1224,146 1226,140 M1258,132 C1272,130 1278,140 1272,150 C1266,156 1256,156 1250,152"/>
    <ellipse cx="1170" cy="192" rx="16" ry="12"/><path d="M1176,182 C1190,176 1206,178 1212,186 C1212,194 1200,200 1186,204 C1180,206 1174,206 1170,204"/>
    <path d="M1158,176 L1158,186 M1155,179 L1161,178 M1155,183 L1161,182"/>
    <path d="M1160,206 L1158,214 L1166,214 M1182,206 L1184,212 L1190,212 M1172,204 L1170,214"/>
    <path d="M1116,186 C1126,180 1138,180 1146,186 M1120,196 C1130,200 1140,196 1146,188 M1118,190 C1112,186 1108,184 1102,186"/>
    <path d="M1222,178 C1232,176 1240,180 1246,186 M1214,204 C1224,210 1236,210 1246,204 M1232,206 C1240,210 1244,208 1244,202"/>
    <path d="M1250,196 C1252,186 1262,180 1272,184 C1278,188 1278,200 1276,210 M1258,174 C1262,166 1268,162 1274,162 M1264,178 C1270,170 1276,168 1278,170 M1256,200 C1258,206 1256,212 1252,216"/>
    <circle cx="1172" cy="156" r="3.500"/><path d="M1180,150 C1182,144 1186,142 1188,146 M1190,152 C1194,146 1198,146 1198,150"/>
   </g>
  </svg>
 </div>
 <div class="a" style="left:68px;top:89px;width:106px;height:74px;border:1px solid #a5102e;box-sizing:border-box"></div>
 <div class="a" style="left:10px;top:166px;width:200px;height:29px;background:#515151"></div>
 <svg width="200" height="29" viewBox="1080 236 200 29" style="left:10px;top:166px">
  <rect x="1084" y="240" width="97" height="9" fill="#595959"/><path d="M1086,248 L1180,242 L1180,248 Z" fill="#3a3a3a"/>
  <rect x="1084" y="254" width="97" height="9" fill="#595959"/><path d="M1086,256 L1132,262 L1180,256 L1180,262 L1086,262 Z" fill="#3a3a3a"/>
  <rect x="1130" y="238" width="3" height="26" fill="#515151" stroke="#7a7a7a" stroke-width="0.700"/>
  <g class="ic" stroke-width="0.900">
   <circle cx="1218" cy="245" r="4.200"/><path d="M1216,245 L1220,245"/>
   <circle cx="1231" cy="245" r="4.200"/><path d="M1229,245 L1233,245 M1231,243 L1231,247"/>
   <circle cx="1244.500" cy="245" r="4.200"/><rect x="1243" y="243.500" width="3" height="3" fill="#ddd"/>
   <rect x="1256" y="241" width="4" height="4" fill="#ddd"/><rect x="1260" y="245" width="4" height="4"/>
   <rect x="1269" y="241" width="8" height="8"/><path d="M1271,243 L1275,247"/>
   <path d="M1221,258.500 A4,4 0 1 1 1217,254.500 M1214,256 L1214,259 L1217,259"/>
   <path d="M1227,258.500 A4,4 0 1 0 1231,254.500"/>
   <circle cx="1244.500" cy="258.500" r="4.200"/><path d="M1244.500,256 L1244.500,260 M1243,259 L1244.500,260.500 L1246,259"/>
   <path d="M1257,255 L1257,262 L1260,258.500 Z M1265,255 L1265,262 L1262,258.500 Z" fill="#ddd"/><path d="M1261,254 L1261,263"/>
   <path d="M1270,254 L1277,254 L1273.500,257 Z M1270,263 L1277,263 L1273.500,260 Z" fill="#ddd"/><path d="M1269,258.500 L1278,258.500"/>
  </g>
  <path d="M1252.500,239 L1252.500,263" stroke="#666" stroke-width="0.800"/>
 </svg>
 <span class="t" style="left:126px;top:171px;font-size:7.500px;color:#f0f0f0">50.0</span>
 <span class="t" style="left:130px;top:184px;font-size:7.500px;color:#f0f0f0">0.0</span>
 <div class="a" style="left:10px;top:196px;width:200px;height:14px;background:#3e3e3e"></div>
 <div class="a" style="left:22px;top:197px;width:36px;height:13px;background:#565656"></div>
 <div class="a" style="left:59px;top:198px;width:19px;height:12px;background:#4c4c4c"></div>
 <div class="a" style="left:79px;top:198px;width:19px;height:12px;background:#4c4c4c"></div>
 <div class="a" style="left:99px;top:198px;width:19px;height:12px;background:#4c4c4c"></div>
 <div class="a" style="left:13px;top:201px;width:6px;height:5px;border-top:1px solid #8c8c8c;border-bottom:1px solid #8c8c8c;box-sizing:border-box"></div>
 <div class="a" style="left:13px;top:203px;width:6px;height:1px;background:#8c8c8c"></div>
 <svg width="12" height="12" viewBox="0 0 12 12" style="left:25px;top:198px"><g class="ic" stroke-width="0.900"><path d="M6,1 L10.500,3.500 L6,6 L1.500,3.500 Z M1.500,6 L6,8.500 L10.500,6 M1.500,8.500 L6,11 L10.500,8.500"/></g></svg>
 <span class="t" style="left:39px;top:200px;font-size:7.500px;color:#e0e0e0;letter-spacing:-0.2px">Layer</span>
 <div class="a" style="left:10px;top:210px;width:200px;height:45px;background:#515151"></div>
 <div class="a" style="left:11px;top:211px;width:25px;height:13px;border:1px solid #6a6a6a;box-sizing:border-box;background:#585858"></div>
 <div class="a" style="left:15px;top:214px;width:8px;height:7px;border:1px solid #aaa;box-sizing:border-box"></div>
 <svg width="8" height="6" viewBox="0 0 8 6" style="left:26px;top:215px"><path d="M1.500,1.500 L4,4 L6.500,1.500" class="ic" stroke-width="0.900"/></svg>
 <div class="a" style="left:38px;top:211px;width:72px;height:13px;border:1px solid #6a6a6a;box-sizing:border-box;background:#585858"></div>
 <span class="t" style="left:59px;top:214px;font-size:7.500px;color:#f0f0f0;letter-spacing:-0.2px">Normal</span>
 <svg width="8" height="6" viewBox="0 0 8 6" style="left:100px;top:215px"><path d="M1.500,1.500 L4,4 L6.500,1.500" class="ic" stroke-width="0.900"/></svg>
 <div class="ck" style="left:114px;top:214px;width:70px;height:6px;background-size:4px 4px;background-position:0 0,2px 2px"></div>
 <div class="a" style="left:114px;top:214px;width:70px;height:6px;background:linear-gradient(to right,rgba(230,230,230,0),#e6e6e6 60%)"></div>
 <div class="a" style="left:184px;top:212px;width:2px;height:11px;background:#777"></div>
 <span class="t" style="left:188px;top:214px;font-size:7.500px;color:#f0f0f0">100</span><div class="sp" style="left:201px;top:213px"></div>
 <svg width="200" height="30" viewBox="1080 294 200 30" style="left:10px;top:224px">
  <g class="ic" stroke-width="0.900">
   <rect x="1143" y="298" width="7" height="7"/><rect x="1145" y="300" width="7" height="7" fill="#ccc"/>
   <path d="M1156,299 L1162,299 M1159,299 L1159,307 M1157,307 L1161,307"/>
   <path d="M1169,298 L1172,298 L1172,305 L1169,305 Z M1174,306 L1176,306"/>
   <rect x="1183" y="302" width="7" height="5" fill="#ddd"/><path d="M1184.500,302 L1184.500,300 C1184.500,297.500 1188.500,297.500 1188.500,300 L1188.500,302"/>
   <rect x="1196" y="303" width="5" height="4" fill="#ddd"/><rect x="1201" y="298" width="2.500" height="2.500" fill="#ddd"/><rect x="1204" y="301" width="2.500" height="2.500" fill="#ddd"/>
   <g opacity="0.300"><rect x="1210" y="298" width="8" height="8"/><path d="M1221,301 L1223,303 L1225,301"/><path d="M1234,306 L1242,298 M1234,298 L1242,298 L1242,306"/><path d="M1246,301 L1248,303 L1250,301"/></g>
   <path d="M1272,301 L1274.500,303.500 L1277,301"/>
  </g>
  <rect x="1254" y="296" width="26" height="13" fill="none" stroke="#6a6a6a" stroke-width="0.800"/>
  <rect x="1260" y="301" width="8" height="7" fill="#fff"/><rect x="1257" y="298" width="8" height="7" fill="#3d7fe0"/>
  <g class="ic" stroke-width="0.900">
   <rect x="1082" y="312" width="9" height="9"/><path d="M1084.500,312 L1084.500,321 M1084.500,316.500 L1091,316.500"/>
   <rect x="1175" y="312" width="8" height="8"/><circle cx="1183" cy="320" r="1.800" fill="#515151"/>
   <rect x="1189" y="312" width="8" height="8"/><circle cx="1193" cy="316" r="2"/><circle cx="1197" cy="320" r="1.800" fill="#515151"/>
   <path d="M1202,313 L1205,313 L1206,314.500 L1211,314.500 L1211,320 L1202,320 Z" fill="#ccc"/><circle cx="1211" cy="320" r="1.800" fill="#515151"/>
   <g opacity="0.300"><rect x="1215" y="312" width="8" height="8"/><rect x="1228" y="312" width="8" height="8"/><rect x="1254" y="314" width="9" height="6"/></g>
   <rect x="1241" y="312" width="9" height="9" fill="#ddd"/><circle cx="1245.500" cy="316.500" r="2.200" fill="#444" stroke="none"/>
   <path d="M1269,314 L1275,314 L1274.500,321 L1269.500,321 Z M1268,314 L1276,314 M1271,312.500 L1273,312.500"/>
  </g>
 </svg>
</div>
<div id="layers" class="a" style="left:1080px;top:326px;width:191px;height:110px;background:#454545">
 <div class="a" style="left:27px;top:22px;width:164px;height:21px;background:#6a7594"></div>
 <div class="a" style="left:0;top:21.500px;width:191px;height:1px;background:#383838"></div>
 <div class="a" style="left:0;top:43px;width:191px;height:1px;background:#383838"></div>
 <div class="a" style="left:0;top:65px;width:191px;height:1px;background:#383838"></div>
 <div class="a" style="left:0;top:87px;width:191px;height:1px;background:#383838"></div>
 <div class="a" style="left:0;top:109px;width:191px;height:1px;background:#383838"></div>
 <div class="a" style="left:13px;top:0;width:1px;height:110px;background:#3c3c3c"></div>
 <div class="a" style="left:26px;top:0;width:1px;height:110px;background:#3c3c3c"></div>
 <svg width="30" height="110" viewBox="0 0 30 110" style="left:0;top:0">
  <g fill="#c4c4c4" stroke="none">
   <path d="M2,11 C4,7.500 10,7.500 12,11 C10,14.500 4,14.500 2,11 Z"/><circle cx="7" cy="11" r="1.700" fill="#454545"/>
   <path d="M2,33 C4,29.500 10,29.500 12,33 C10,36.500 4,36.500 2,33 Z"/><circle cx="7" cy="33" r="1.700" fill="#454545"/>
   <path d="M2,98 C4,94.500 10,94.500 12,98 C10,101.500 4,101.500 2,98 Z"/><circle cx="7" cy="98" r="1.700" fill="#454545"/>
  </g>
  <path d="M16,37 L17,34 L22,28.500 L23.500,30 L18.500,35.500 Z M15.500,38.500 L24,38.500" class="ic" stroke-width="0.900"/>
 </svg>
 <div class="ck" style="left:30px;top:3px;width:22px;height:15px;border:1px solid #eee;box-sizing:border-box;background-size:4px 4px;background-position:0 0,2px 2px"></div>
 <div class="a" style="left:29px;top:24px;width:24px;height:18px;background:#fddde1;border:1px solid #fff;outline:1px solid #222;box-sizing:border-box;overflow:hidden">
  <svg width="22" height="16" viewBox="0 0 22 16" style="left:0;top:0"><g fill="#a05a56"><circle cx="4" cy="5" r="1.500"/><circle cx="10" cy="4" r="1.600"/><circle cx="17" cy="5" r="1.800"/><rect x="16" y="6" width="2" height="3"/><circle cx="4" cy="12" r="1.800"/><circle cx="11" cy="11" r="1.500"/></g></svg>
 </div>
 <div class="a" style="left:27px;top:44px;width:2px;height:21px;background:#9fe0e6"></div>
 <div class="ck" style="left:33px;top:47px;width:22px;height:15px;border:1px solid #eee;box-sizing:border-box;background-size:4px 4px;background-position:0 0,2px 2px"></div>
 <div class="a" style="left:63px;top:46px;width:11px;height:11px;background:#f4f4f4;border-radius:1px"></div>
 <div class="a" style="left:65px;top:47px;width:6px;height:4px;background:#e09aa0"></div>
 <div class="a" style="left:64px;top:52px;width:5px;height:4px;background:#3d7fe0"></div>
 <div class="a" style="left:69px;top:52px;width:5px;height:5px;background:#333;border:1px solid #fff;box-sizing:border-box"></div>
 <div class="ck" style="left:30px;top:69px;width:22px;height:15px;border:1px solid #eee;box-sizing:border-box;background-size:4px 4px;background-position:0 0,2px 2px"></div>
 <div class="a" style="left:30px;top:91px;width:22px;height:15px;background:#fff"></div>
 <svg width="12" height="12" viewBox="0 0 12 12" style="left:61px;top:88px"><path d="M3,1.500 L10,1.500 L10,10 L5,10 L3,8 Z" fill="#eee"/><path d="M2,3 L2,10.500 L8,10.500" class="ic" stroke-width="0.900"/><rect x="4.500" y="3" width="3.500" height="5.500" fill="#444"/></svg>
 <span class="t" style="left:57px;top:3px;font-size:7.300px;color:#f0f0f0;letter-spacing:-0.2px">100 % Normal</span>
 <span class="t" style="left:57px;top:11.500px;font-size:7.300px;color:#f0f0f0;letter-spacing:-0.2px">Layer 3</span>
 <span class="t" style="left:57px;top:25px;font-size:7.300px;color:#f4f4f8;letter-spacing:-0.2px">100 % Normal</span>
 <span class="t" style="left:57px;top:33.500px;font-size:7.300px;color:#f4f4f8;letter-spacing:-0.2px">Layer 4</span>
 <span class="t" style="left:77px;top:47px;font-size:7.300px;color:#f0f0f0;letter-spacing:-0.2px">35 % Normal</span>
 <span class="t" style="left:77px;top:55.500px;font-size:7.300px;color:#f0f0f0;letter-spacing:-0.2px">Layer 2</span>
 <span class="t" style="left:57px;top:69px;font-size:7.300px;color:#f0f0f0;letter-spacing:-0.2px">25 % Normal</span>
 <span class="t" style="left:57px;top:77.500px;font-size:7.300px;color:#f0f0f0;letter-spacing:-0.2px">Layer 1</span>
 <span class="t" style="left:74px;top:99px;font-size:7.300px;color:#f0f0f0;letter-spacing:-0.2px">Paper</span>
 <svg width="30" height="110" viewBox="160 0 30 110" style="left:160px;top:0">
  <g class="ic" stroke-width="0.900">
   <rect x="178" y="8.500" width="6" height="4.500" fill="#ddd"/><path d="M179.500,8.500 L179.500,7 C179.500,5 182.500,5 182.500,7 L182.500,8.500"/>
   <rect x="178" y="51.500" width="6" height="4.500" fill="#ddd"/><path d="M179.500,51.500 L179.500,50 C179.500,48 182.500,48 182.500,50 L182.500,51.500"/>
   <rect x="178" y="73.500" width="6" height="4.500" fill="#ddd"/><path d="M179.500,73.500 L179.500,72 C179.500,70 182.500,70 182.500,72 L182.500,73.500"/>
   <path d="M166,48 L169,48 L169,55 L166,55 Z M171,56 L173,56"/>
  </g>
 </svg>
</div>
<div class="a" style="left:1271px;top:326px;width:9px;height:112px;background:#4e4e4e"></div>
<div id="music" class="a">
 <div class="a" style="left:14px;top:11px;width:52px;height:46px;background:#e9e6dc;overflow:hidden">
  <div class="a" style="left:0;top:0;width:52px;height:37px;background:linear-gradient(to bottom,#efede4,#dedace)"></div>
  <div class="a" style="left:0;top:36px;width:52px;height:10px;background:#1c1a18"></div>
  <div class="a" style="left:3px;top:40px;width:30px;height:5px;background:#dcd9d0;border-radius:2px"></div>
  <div class="a" style="left:5px;top:30px;width:20px;height:8px;background:#b9b4a4"></div>
  <div class="a" style="left:10px;top:22px;width:5px;height:9px;background:#4a443c"></div>
  <div class="a" style="left:18px;top:31px;width:8px;height:8px;background:#8a8270;border-radius:3px"></div>
  <div class="a" style="left:4px;top:6px;width:22px;height:1px;background:#a9a598"></div>
  <div class="a" style="left:6px;top:10px;width:18px;height:1px;background:#b5b1a4"></div>
  <div class="a" style="left:16px;top:18px;width:8px;height:2px;background:#6a655a"></div>
  <div class="a" style="left:14px;top:25px;width:18px;height:1px;background:#8f8a7c"></div>
  <div class="a" style="left:34px;top:0;width:12px;height:12px;background:#151515;border-radius:3px 3px 2px 2px"></div>
  <div class="a" style="left:35px;top:11px;width:5px;height:28px;background:#4a3028"></div>
  <div class="a" style="left:41px;top:11px;width:5px;height:28px;background:#3c2620"></div>
 </div>
 <span class="t" style="left:78px;top:21px;font-size:12.200px;font-weight:bold;color:#fff;letter-spacing:-0.1px">Don't Turn the Lights On</span>
 <span class="t" style="left:78px;top:38px;font-size:9px;font-weight:bold;color:#a8a8a8;letter-spacing:0.1px">Chromeo</span>
 <svg width="16" height="14" viewBox="0 0 16 14" style="left:241px;top:27px"><path d="M8,12.500 C3,8.500 1.500,6.500 1.500,4.300 C1.500,1 6,0.300 8,3.300 C10,0.300 14.500,1 14.500,4.300 C14.500,6.500 13,8.500 8,12.500 Z" fill="none" stroke="#e8e8e8" stroke-width="1.400" stroke-linejoin="round"/></svg>
</div>
<div id="banner" class="a">
 <svg width="1280" height="28" viewBox="0 692 1280 28" style="left:0;top:0" font-family="'Liberation Sans',sans-serif" font-weight="bold" font-style="italic" fill="#21a9f4">
  <text x="38" y="718" font-size="24.500" textLength="112" lengthAdjust="spacingAndGlyphs"><tspan font-size="31">T</tspan>WITTER</text>
  <text x="160" y="716" font-size="30" textLength="15" lengthAdjust="spacingAndGlyphs">-</text>
  <text x="186" y="718" font-size="24.500" textLength="239" lengthAdjust="spacingAndGlyphs">@GLASSFISHBOWL</text>
  <text x="447" y="718" font-size="33" font-weight="normal" textLength="13" lengthAdjust="spacingAndGlyphs">/</text>
  <text x="467" y="718" font-size="24.500" textLength="326" lengthAdjust="spacingAndGlyphs">THEGLASSFISHBOWL.COM</text>
  <text x="805" y="718" font-size="33" font-weight="normal" textLength="12" lengthAdjust="spacingAndGlyphs">/</text>
  <text x="838" y="718" font-size="24.500" textLength="205" lengthAdjust="spacingAndGlyphs"><tspan font-size="31">(M</tspan>IC IS <tspan font-size="31">ON!)</tspan></text>
 </svg>
</div>
<svg id="avatar" width="240" height="180" viewBox="1040 540 240 180" style="left:1040px;top:540px;z-index:30">
 <g stroke="#1a1a1a" stroke-width="1.200" stroke-linejoin="round">
  <path d="M1234,696 L1264,704 L1246,720 L1216,720 Z" fill="#b4b4b4"/>
  <path d="M1204,650 C1222,648 1242,660 1258,676 L1240,700 C1228,690 1214,684 1200,680 Z" fill="#b4b4b4"/>
  <path d="M1244,676 C1256,672 1266,682 1268,694 C1268,702 1262,708 1252,708 C1244,702 1238,694 1236,686 Z" fill="#8e8e8e"/>
  <path d="M1188,634 C1200,630 1216,640 1224,656 C1226,664 1224,668 1218,670 C1206,672 1196,674 1186,670 Z" fill="#8a8a8a"/>
  <path d="M1150,632 L1180,632 L1182,658 L1148,658 Z" fill="#a4a4a4"/>
  <path d="M1118,654 C1140,646 1176,644 1196,652 C1204,670 1204,700 1196,720 L1110,720 C1106,700 1108,670 1118,654 Z" fill="#aaaaaa"/>
  <path d="M1136,664 C1146,660 1156,662 1160,670 C1168,662 1182,662 1190,670 M1160,670 L1158,690" fill="none" stroke-width="1"/>
  <path d="M1128,646 C1130,660 1134,672 1140,680 C1150,688 1164,684 1172,672 C1180,660 1186,646 1192,634 L1198,638 C1192,654 1190,668 1192,680 C1196,694 1190,710 1180,720 L1090,720 C1082,706 1080,690 1088,678 C1098,664 1114,656 1128,646 Z" fill="#40b868"/>
  <path d="M1084,696 C1084,680 1096,668 1112,666 C1128,666 1138,676 1140,690 C1150,680 1170,678 1184,688" fill="none" stroke-width="1"/>
  <path d="M1058,690 L1078,690 L1084,720 L1064,720 Z" fill="#a8a8a8"/>
  <path d="M1050,668 L1078,665 C1082,674 1082,684 1078,691 L1052,692 C1046,686 1046,674 1050,668 Z" fill="#8c8c8c"/>
  <path d="M1070,666 C1068,654 1072,644 1078,640 C1084,646 1082,658 1080,667 Z" fill="#b0b0b0"/>
  <path d="M1049,675 L1074,673 M1049,681 L1074,680 M1050,687 L1074,686" fill="none" stroke-width="0.900"/>
 </g>
 <path d="M1108,560 C1098,580 1100,606 1116,620 C1130,631 1146,634 1158,634 C1172,634 1188,631 1200,620 C1216,606 1220,580 1210,560 Z" fill="#f4fbfe" stroke="#cfdde4" stroke-width="0.800"/>
 <path d="M1110,575 C1130,568 1190,568 1209,575 C1213,596 1204,612 1192,620 C1182,625 1170,627 1158,627 C1146,627 1134,625 1126,620 C1112,612 1106,596 1110,575 Z" fill="#6cc3ee" stroke="#2a4a5a" stroke-width="0.600"/>
 <path d="M1142,624 C1150,618 1168,618 1176,624 C1166,628 1150,628 1142,624 Z" fill="#93d6f5"/>
 <ellipse cx="1158" cy="557" rx="56" ry="10.500" fill="#f6fcff" stroke="#cfdde4" stroke-width="0.800"/>
 <ellipse cx="1159" cy="559" rx="42" ry="5.500" fill="#fdfeff" stroke="#333" stroke-width="0.800"/>
 <path d="M1126,590 L1131,594 L1134,590 L1137,587 L1141,588 C1146,587 1150,590 1150,595 C1149,600 1143,602 1138,601 L1139,604 L1134,600 L1127,603 L1130,597 Z" fill="#2a3cc0" stroke="#0e1860" stroke-width="0.500"/>
 <path d="M1126,590 L1131,594 L1130,597 L1127,603 Z M1137,587 L1141,588 L1139,585 Z" fill="#bfe6f8"/>
 <circle cx="1145.500" cy="593.500" r="1.900" fill="#fff"/><circle cx="1145.800" cy="593.500" r="0.800" fill="#000"/>
</svg>
</body></html>
